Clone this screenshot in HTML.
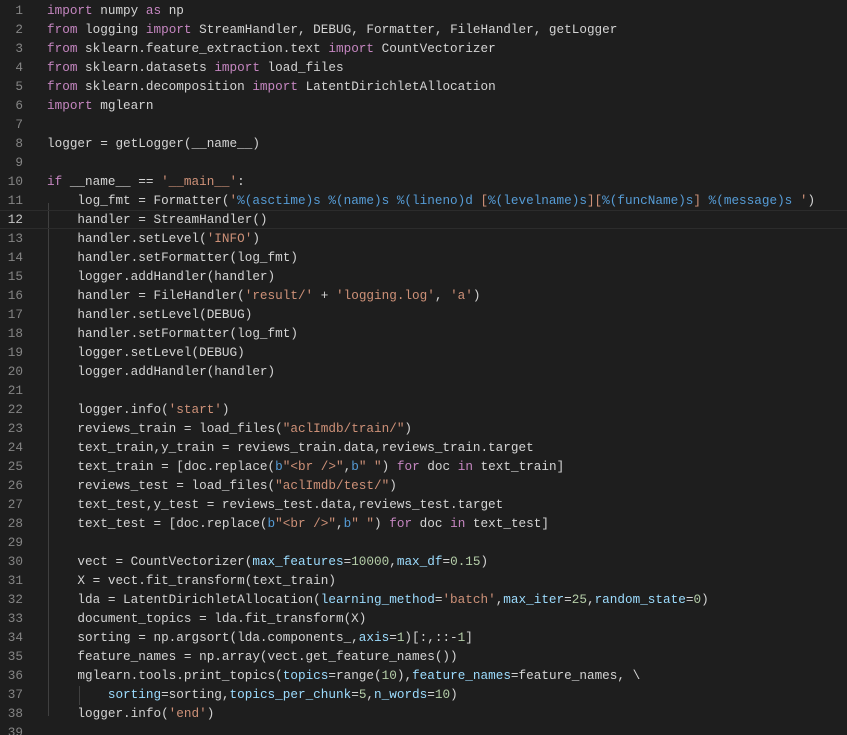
<!DOCTYPE html>
<html><head><meta charset="utf-8"><style>
html,body{margin:0;padding:0;background:#1e1e1e;width:847px;height:735px;overflow:hidden}
.ed{position:relative;padding-top:1px;font-family:"Liberation Mono",monospace;font-size:12.68px;line-height:19px;color:#d4d4d4}
.l{position:relative;height:19px;white-space:pre}
.n{position:absolute;left:0;width:23px;text-align:right;color:#858585}
.c{position:absolute;left:47px;white-space:pre}
.cur{box-sizing:border-box;border-top:1px solid #2c2c2c;border-bottom:1px solid #2c2c2c;line-height:17px}
.cur .n{color:#c6c6c6}
.k{color:#c586c0}.s{color:#ce9178}.b{color:#569cd6}.p{color:#9cdcfe}.d{color:#b5cea8}
.g{position:absolute;width:1px;background:#404040}
</style></head><body><div class="ed"><div class="g" style="left:48px;top:203px;height:513px"></div><div class="g" style="left:79px;top:686px;height:19px"></div>
<div class="l"><span class="n">1</span><span class="c"><span class="k">import</span> numpy <span class="k">as</span> np</span></div>
<div class="l"><span class="n">2</span><span class="c"><span class="k">from</span> logging <span class="k">import</span> StreamHandler, DEBUG, Formatter, FileHandler, getLogger</span></div>
<div class="l"><span class="n">3</span><span class="c"><span class="k">from</span> sklearn.feature_extraction.text <span class="k">import</span> CountVectorizer</span></div>
<div class="l"><span class="n">4</span><span class="c"><span class="k">from</span> sklearn.datasets <span class="k">import</span> load_files</span></div>
<div class="l"><span class="n">5</span><span class="c"><span class="k">from</span> sklearn.decomposition <span class="k">import</span> LatentDirichletAllocation</span></div>
<div class="l"><span class="n">6</span><span class="c"><span class="k">import</span> mglearn</span></div>
<div class="l"><span class="n">7</span><span class="c"></span></div>
<div class="l"><span class="n">8</span><span class="c">logger = getLogger(__name__)</span></div>
<div class="l"><span class="n">9</span><span class="c"></span></div>
<div class="l"><span class="n">10</span><span class="c"><span class="k">if</span> __name__ == <span class="s">'__main__'</span>:</span></div>
<div class="l"><span class="n">11</span><span class="c">    log_fmt = Formatter(<span class="s">'</span><span class="b">%(asctime)s %(name)s %(lineno)d </span><span class="s">[</span><span class="b">%(levelname)s</span><span class="s">][</span><span class="b">%(funcName)s</span><span class="s">] </span><span class="b">%(message)s</span><span class="s"> '</span>)</span></div>
<div class="l cur"><span class="n">12</span><span class="c">    handler = StreamHandler()</span></div>
<div class="l"><span class="n">13</span><span class="c">    handler.setLevel(<span class="s">'INFO'</span>)</span></div>
<div class="l"><span class="n">14</span><span class="c">    handler.setFormatter(log_fmt)</span></div>
<div class="l"><span class="n">15</span><span class="c">    logger.addHandler(handler)</span></div>
<div class="l"><span class="n">16</span><span class="c">    handler = FileHandler(<span class="s">'result/'</span> + <span class="s">'logging.log'</span>, <span class="s">'a'</span>)</span></div>
<div class="l"><span class="n">17</span><span class="c">    handler.setLevel(DEBUG)</span></div>
<div class="l"><span class="n">18</span><span class="c">    handler.setFormatter(log_fmt)</span></div>
<div class="l"><span class="n">19</span><span class="c">    logger.setLevel(DEBUG)</span></div>
<div class="l"><span class="n">20</span><span class="c">    logger.addHandler(handler)</span></div>
<div class="l"><span class="n">21</span><span class="c"></span></div>
<div class="l"><span class="n">22</span><span class="c">    logger.info(<span class="s">'start'</span>)</span></div>
<div class="l"><span class="n">23</span><span class="c">    reviews_train = load_files(<span class="s">"aclImdb/train/"</span>)</span></div>
<div class="l"><span class="n">24</span><span class="c">    text_train,y_train = reviews_train.data,reviews_train.target</span></div>
<div class="l"><span class="n">25</span><span class="c">    text_train = [doc.replace(<span class="b">b</span><span class="s">"&lt;br /&gt;"</span>,<span class="b">b</span><span class="s">" "</span>) <span class="k">for</span> doc <span class="k">in</span> text_train]</span></div>
<div class="l"><span class="n">26</span><span class="c">    reviews_test = load_files(<span class="s">"aclImdb/test/"</span>)</span></div>
<div class="l"><span class="n">27</span><span class="c">    text_test,y_test = reviews_test.data,reviews_test.target</span></div>
<div class="l"><span class="n">28</span><span class="c">    text_test = [doc.replace(<span class="b">b</span><span class="s">"&lt;br /&gt;"</span>,<span class="b">b</span><span class="s">" "</span>) <span class="k">for</span> doc <span class="k">in</span> text_test]</span></div>
<div class="l"><span class="n">29</span><span class="c"></span></div>
<div class="l"><span class="n">30</span><span class="c">    vect = CountVectorizer(<span class="p">max_features</span>=<span class="d">10000</span>,<span class="p">max_df</span>=<span class="d">0.15</span>)</span></div>
<div class="l"><span class="n">31</span><span class="c">    X = vect.fit_transform(text_train)</span></div>
<div class="l"><span class="n">32</span><span class="c">    lda = LatentDirichletAllocation(<span class="p">learning_method</span>=<span class="s">'batch'</span>,<span class="p">max_iter</span>=<span class="d">25</span>,<span class="p">random_state</span>=<span class="d">0</span>)</span></div>
<div class="l"><span class="n">33</span><span class="c">    document_topics = lda.fit_transform(X)</span></div>
<div class="l"><span class="n">34</span><span class="c">    sorting = np.argsort(lda.components_,<span class="p">axis</span>=<span class="d">1</span>)[:,::-<span class="d">1</span>]</span></div>
<div class="l"><span class="n">35</span><span class="c">    feature_names = np.array(vect.get_feature_names())</span></div>
<div class="l"><span class="n">36</span><span class="c">    mglearn.tools.print_topics(<span class="p">topics</span>=range(<span class="d">10</span>),<span class="p">feature_names</span>=feature_names, \</span></div>
<div class="l"><span class="n">37</span><span class="c">        <span class="p">sorting</span>=sorting,<span class="p">topics_per_chunk</span>=<span class="d">5</span>,<span class="p">n_words</span>=<span class="d">10</span>)</span></div>
<div class="l"><span class="n">38</span><span class="c">    logger.info(<span class="s">'end'</span>)</span></div>
<div class="l"><span class="n">39</span><span class="c"></span></div>
</div></body></html>
